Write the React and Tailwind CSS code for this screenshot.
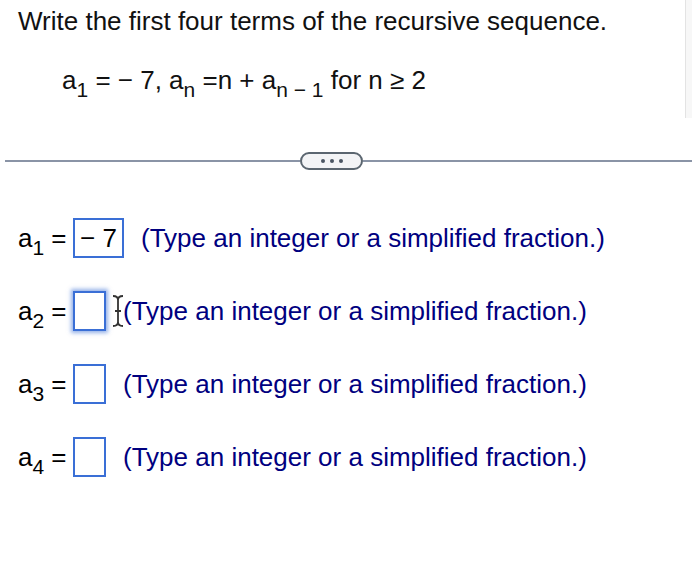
import React from "react";

const Sub = ({ children }) => (
  <span className="relative top-[8px] text-[21px]">{children}</span>
);

const AnswerRow = ({ n, value, focused, cursor }) => (
  <div className="relative flex items-center h-[40px]">
    <span className="w-[73px] flex items-baseline text-black">
      <span className="ml-[18px]">a</span>
      <Sub>{n}</Sub>
      <span className="ml-[7px]">=</span>
    </span>
    <div
      className={`h-[40px] border-2 border-[#3a6fd6] flex items-center justify-center text-black ${
        value ? "w-[51px]" : "w-[33px]"
      } ${focused ? "shadow-[0_0_4px_2px_rgba(59,111,214,0.55)]" : ""}`}
    >
      {value}
    </div>
    {cursor ? (
      <svg width="12" height="34" viewBox="0 0 12 34" className="absolute left-[112px] top-[3px]">
        <path d="M1 2 Q6 2 6 6 L6 28 Q6 32 1 32 M11 2 Q6 2 6 6 M6 28 Q6 32 11 32 M3 17 L9 17" stroke="#333" strokeWidth="1.8" fill="none" />
      </svg>
    ) : null}
    <span className="ml-[17px] text-[#00007f]">
      (Type an integer or a simplified fraction.)
    </span>
  </div>
);

export default function App() {
  return (
    <div className="relative w-[692px] h-[577px] bg-white overflow-hidden font-['Liberation_Sans',Arial,sans-serif] text-[26px] text-[#111]">
      <div className="absolute right-0 top-0 w-[7px] h-[118px] bg-[#f7f7f7] border-l border-[#e3e3e3]" />

      <p className="pl-[18px] pt-[6px] leading-[30px]">
        Write the first four terms of the recursive sequence.
      </p>

      <p className="pl-[62px] mt-[29px] h-[30px] leading-[30px] flex items-baseline whitespace-pre">
        <span>a</span>
        <Sub>1</Sub>
        <span> = − 7, a</span>
        <Sub>n</Sub>
        <span> =n + a</span>
        <Sub>n − 1</Sub>
        <span> for n ≥ 2</span>
      </p>

      <div className="mt-[57px] ml-[5px] flex items-center">
        <div className="flex-1 h-[2px] bg-[#8a94a6]" />
        <div className="w-[63px] h-[18px] rounded-full border-2 border-[#5b6670] bg-[#f3f4f6] flex items-center justify-center gap-[5px]">
          <span className="w-[4px] h-[4px] rounded-full bg-[#4b5563]" />
          <span className="w-[4px] h-[4px] rounded-full bg-[#4b5563]" />
          <span className="w-[4px] h-[4px] rounded-full bg-[#4b5563]" />
        </div>
        <div className="w-[329px] h-[2px] bg-[#8a94a6]" />
      </div>

      <div className="mt-[48px] flex flex-col gap-[33px]">
        <AnswerRow n="1" value="− 7" />
        <AnswerRow n="2" focused cursor />
        <AnswerRow n="3" />
        <AnswerRow n="4" />
      </div>
    </div>
  );
}
